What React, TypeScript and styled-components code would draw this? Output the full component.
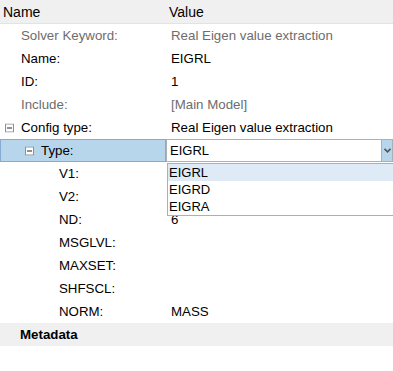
import React from 'react';
import styled, { createGlobalStyle } from 'styled-components';

const GlobalStyle = createGlobalStyle`
  html, body {
    margin: 0;
    padding: 0;
    background: #ffffff;
  }
  body {
    font-family: "Liberation Sans", Arial, sans-serif;
    font-size: 13.3px;
    color: #000;
  }
`;

type Row = {
  label: string;
  value?: string;
  level: number;
  dim?: boolean;
  toggle?: boolean;
};

const rows: Row[] = [
  { label: 'Solver Keyword:', value: 'Real Eigen value extraction', level: 1, dim: true },
  { label: 'Name:', value: 'EIGRL', level: 1 },
  { label: 'ID:', value: '1', level: 1 },
  { label: 'Include:', value: '[Main Model]', level: 1, dim: true },
  { label: 'Config type:', value: 'Real Eigen value extraction', level: 1, toggle: true },
];

const subRows: Row[] = [
  { label: 'V1:', level: 3 },
  { label: 'V2:', level: 3 },
  { label: 'ND:', value: '6', level: 3 },
  { label: 'MSGLVL:', level: 3 },
  { label: 'MAXSET:', level: 3 },
  { label: 'SHFSCL:', level: 3 },
  { label: 'NORM:', value: 'MASS', level: 3 },
];

const options = ['EIGRL', 'EIGRD', 'EIGRA'];

const indent = (level: number) => (level === 1 ? 21 : level === 2 ? 41 : 59);

const Minus = () => (
  <ToggleBox>
    <svg width="9" height="9" viewBox="0 0 9 9">
      <rect x="0.5" y="0.5" width="8" height="8" fill="#fff" stroke="#8e8f8f" />
      <line x1="2" y1="4.5" x2="7" y2="4.5" stroke="#222" />
    </svg>
  </ToggleBox>
);

const Chevron = () => (
  <svg width="7" height="5" viewBox="0 0 7 5">
    <path d="M0.5 0.8 L3.5 3.8 L6.5 0.8" fill="none" stroke="#555" strokeWidth="1.6" />
  </svg>
);

export default function App() {
  return (
    <>
      <GlobalStyle />
      <Table>
        <Header>
          <HeadCell>Name</HeadCell>
          <HeadCell $value>Value</HeadCell>
        </Header>

        {rows.map((r) => (
          <RowLine key={r.label}>
            <NameCell $pad={indent(r.level)} $dim={r.dim}>
              {r.toggle && <ToggleSlot $left={5}><Minus /></ToggleSlot>}
              {r.label}
            </NameCell>
            <ValueCell $dim={r.dim}>{r.value}</ValueCell>
          </RowLine>
        ))}

        <RowLine>
          <SelectedName $pad={indent(2)}>
            <ToggleSlot $left={24}><Minus /></ToggleSlot>
            Type:
          </SelectedName>
          <ComboCell>
            <Combo>
              <ComboText>EIGRL</ComboText>
              <ComboButton><Chevron /></ComboButton>
            </Combo>
            <OptionList>
              {options.map((o, i) => (
                <OptionItem key={o} $active={i === 0}>{o}</OptionItem>
              ))}
            </OptionList>
          </ComboCell>
        </RowLine>

        {subRows.map((r) => (
          <RowLine key={r.label}>
            <NameCell $pad={indent(r.level)}>{r.label}</NameCell>
            <ValueCell>{r.value}</ValueCell>
          </RowLine>
        ))}

        <GroupRow>Metadata</GroupRow>
      </Table>
    </>
  );
}

const Table = styled.div`
  width: 393px;
  display: flex;
  flex-direction: column;
`;

const Header = styled.div`
  display: grid;
  grid-template-columns: 166px 1fr;
  height: 23px;
  background: #f0f0f0;
  border-bottom: 1px solid #e3e3e3;
`;

const HeadCell = styled.div<{ $value?: boolean }>`
  display: flex;
  align-items: center;
  padding-left: ${({ $value }) => ($value ? '3px' : '3px')};
  font-size: 14px;
  color: #000;
`;

const RowLine = styled.div`
  display: grid;
  grid-template-columns: 166px 1fr;
  height: 23px;
`;

const NameCell = styled.div<{ $pad: number; $dim?: boolean }>`
  position: relative;
  display: flex;
  align-items: center;
  padding-left: ${({ $pad }) => $pad}px;
  color: ${({ $dim }) => ($dim ? '#6d6d6d' : '#000')};
  white-space: nowrap;
`;

const SelectedName = styled(NameCell)`
  background: #b7d6ec;
  border: 1px solid #86aad2;
  padding-left: ${({ $pad }) => $pad - 1}px;
`;

const ToggleSlot = styled.span<{ $left: number }>`
  position: absolute;
  left: ${({ $left }) => $left}px;
  top: 50%;
  transform: translateY(-50%);
  display: flex;
`;

const ToggleBox = styled.span`
  display: flex;
`;

const ValueCell = styled.div<{ $dim?: boolean }>`
  display: flex;
  align-items: center;
  padding-left: 5px;
  color: ${({ $dim }) => ($dim ? '#6d6d6d' : '#000')};
  white-space: nowrap;
`;

const ComboCell = styled.div`
  position: relative;
  display: flex;
`;

const Combo = styled.div`
  flex: 1;
  display: flex;
  background: #fff;
  border: 1px solid #a9b0b7;
`;

const ComboText = styled.div`
  flex: 1;
  display: flex;
  align-items: center;
  padding-left: 3px;
  font-size: 13px;
`;

const ComboButton = styled.div`
  width: 10px;
  display: flex;
  align-items: center;
  justify-content: center;
  background: #b7d6ec;
  border-left: 1px solid #a9b0b7;
`;

const OptionList = styled.div`
  position: absolute;
  top: calc(100% + 1px);
  left: 1px;
  right: -2px;
  background: #fff;
  border: 1px solid #a9b0b7;
  z-index: 2;
`;

const OptionItem = styled.div<{ $active?: boolean }>`
  height: 17px;
  display: flex;
  align-items: center;
  padding-left: 1px;
  font-size: 13px;
  background: ${({ $active }) => ($active ? '#deeaf5' : '#fff')};
`;

const GroupRow = styled.div`
  height: 23px;
  display: flex;
  align-items: center;
  padding-left: 20px;
  background: #f0f0f0;
  font-weight: bold;
`;
